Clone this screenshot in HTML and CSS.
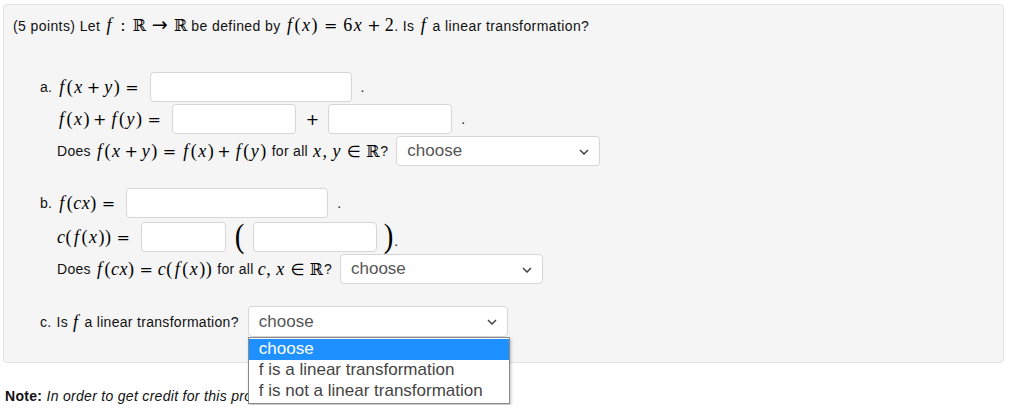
FILE: index.html
```html
<!DOCTYPE html>
<html>
<head>
<meta charset="utf-8">
<link rel="stylesheet" href="styles.css">
</head>
<body>
<div class="well">
  <p class="title">(5 points) Let <span class="m"><i class="f">f</i><span class="op rel col">:</span><span class="bb">ℝ</span><span class="op rel arr">→</span><span class="bb">ℝ</span></span> be defined by <span class="m"><i class="f">f</i>(<i>x</i>)<span class="op rel wide">=</span>6<i>x</i><span class="op bin wide">+</span>2</span>. Is <span class="m"><i class="f">f</i></span> a linear transformation?</p>

  <div class="part part-a">
    <div class="row">
      <span class="lbl">a.</span>
      <span class="m"><i class="f">f</i>(<i>x</i><span class="op bin">+</span><i>y</i>)<span class="op rel">=</span></span>
      <span class="inp w202"></span><span class="dot">.</span>
    </div>
    <div class="row sub">
      <span class="m"><i class="f">f</i>(<i>x</i>)<span class="op bin">+</span><i class="f">f</i>(<i>y</i>)<span class="op rel">=</span></span>
      <span class="inp w124"></span>
      <span class="m plus"><span class="op">+</span></span>
      <span class="inp w124 nm"></span><span class="dot">.</span>
    </div>
    <div class="row sub">
      <span class="txt first">Does</span>
      <span class="m"><i class="f">f</i>(<i>x</i><span class="op bin">+</span><i>y</i>)<span class="op rel">=</span><i class="f">f</i>(<i>x</i>)<span class="op bin">+</span><i class="f">f</i>(<i>y</i>)</span>
      <span class="txt">for all</span>
      <span class="m"><i>x</i>,<span class="th"></span><i>y</i><span class="op rel">∈</span><span class="bb">ℝ</span></span><span class="txt q">?</span>
      <div class="sel w204"><span>choose</span><svg class="chev" width="10" height="6" viewBox="0 0 10 6"><path d="M1 1 L5 5 L9 1" fill="none" stroke="#444" stroke-width="1.5"/></svg></div>
    </div>
  </div>

  <div class="part part-b">
    <div class="row">
      <span class="lbl">b.</span>
      <span class="m"><i class="f">f</i>(<i class="c">c</i><i class="c">x</i>)<span class="op rel">=</span></span>
      <span class="inp w202"></span><span class="dot">.</span>
    </div>
    <div class="row sub tall">
      <span class="m"><i class="c">c</i>(<i class="f">f</i>(<i>x</i>))<span class="op rel">=</span></span>
      <span class="inp w85"></span>
      <span class="big lp">(</span>
      <span class="inp w124 nm"></span>
      <span class="big rp">)</span><span class="dot2">.</span>
    </div>
    <div class="row sub">
      <span class="txt first">Does</span>
      <span class="m"><i class="f">f</i>(<i class="c">c</i><i class="c">x</i>)<span class="op rel">=</span><i class="c">c</i>(<i class="f">f</i>(<i>x</i>))</span>
      <span class="txt">for all</span>
      <span class="m"><i class="c">c</i>,<span class="th"></span><i>x</i><span class="op rel">∈</span><span class="bb">ℝ</span></span><span class="txt q">?</span>
      <div class="sel w203"><span>choose</span><svg class="chev" width="10" height="6" viewBox="0 0 10 6"><path d="M1 1 L5 5 L9 1" fill="none" stroke="#444" stroke-width="1.5"/></svg></div>
    </div>
  </div>

  <div class="part part-c">
    <div class="row rowc">
      <span class="lbl">c.</span>
      <span class="txt first">Is</span>
      <span class="m"><i>f</i></span>
      <span class="txt">a linear transformation?</span>
      <div class="selwrap">
        <div class="sel w260"><span>choose</span><svg class="chev" width="10" height="6" viewBox="0 0 10 6"><path d="M1 1 L5 5 L9 1" fill="none" stroke="#444" stroke-width="1.5"/></svg></div>
        <ul class="menu">
          <li class="on">choose</li>
          <li>f is a linear transformation</li>
          <li>f is not a linear transformation</li>
        </ul>
      </div>
    </div>
  </div>
</div>
<p class="note"><b>Note:</b> <em>In order to get credit for this problem all answers must be correct.</em></p>
</body>
</html>
```

FILE: styles.css
```css
html, body {
  margin: 0;
  padding: 0;
  background: #fff;
}
body {
  font-family: "Liberation Sans", Arial, sans-serif;
  font-size: 14px;
  letter-spacing: 0.3px;
  color: #111;
}
.well {
  box-sizing: border-box;
  margin: 4px 0 0 3px;
  width: 1001px;
  height: 359px;
  background: #f5f5f5;
  border: 1px solid #e3e3e3;
  border-radius: 4px;
  padding: 10px 9px 0 9px;
}
.title {
  margin: 0;
  height: 20px;
  line-height: 20px;
  letter-spacing: 0.4px;
}
.m {
  font-family: "Liberation Serif", "DejaVu Serif", serif;
  font-size: 18px;
  line-height: 1;
  letter-spacing: 0.5px;
  white-space: nowrap;
  color: #000;
}
.m i {
  font-style: italic;
  padding: 0 1px;
}
.m i.f { padding: 0 2px; }
.m i.c { padding: 0; }
.op {
  font-family: "DejaVu Sans", sans-serif;
  font-size: 16px;
  line-height: 1;
  letter-spacing: 0;
}
.bb {
  font-family: "DejaVu Serif", serif;
  font-size: 16px;
  line-height: 1;
  letter-spacing: 0;
}
.rel {
  margin: 0 5px;
}
.rel.wide { margin: 0 6px; }
.rel.col { margin: 0 7px 0 6px; }
.rel.arr { font-size: 19px; margin: 0 6px; }
.bin {
  margin: 0 3px;
}
.bin.wide { margin: 0 4px; }
.th {
  display: inline-block;
  width: 4px;
}
.part {
  display: flex;
  flex-direction: column;
  margin-left: 27px;
}
.part-a { margin-top: 37px; gap: 2px; }
.part-b { margin-top: 22px; }
.part-c { margin-top: 22px; }
.row {
  display: flex;
  align-items: center;
  height: 30px;
  white-space: nowrap;
}
.row.sub { padding-left: 17px; }
.part-b .row.tall { margin-top: 4px; margin-bottom: 2px; }
.rowc { height: 31px; }
.lbl { margin-right: 5px; }
.txt { margin: 0 4px 0 5px; }
.txt.first { margin-left: 0; }
.txt.q { margin: 0 0 0 1px; }
.inp {
  display: inline-block;
  box-sizing: border-box;
  height: 30px;
  background: #fff;
  border: 1px solid #d6d6d6;
  border-radius: 4px;
  margin-left: 6px;
}
.inp.nm { margin-left: 0; }
.w202 { width: 202px; }
.w124 { width: 124px; }
.w85 { width: 85px; }
.dot { margin-left: 9px; }
.plus { margin: 0 9px 0 10px; }
.big {
  font-family: "Liberation Serif", serif;
  font-size: 34px;
  line-height: 30px;
  color: #000;
  transform: scaleX(0.85);
}
.lp { margin: -2px 7px 0 8px; }
.rp { margin: -2px 0 0 6px; }
.dot2 { align-self: flex-end; margin-bottom: 3px; }
.sel {
  box-sizing: border-box;
  display: flex;
  align-items: center;
  justify-content: space-between;
  height: 30px;
  background: #fff;
  border: 1px solid #d6d6d6;
  border-radius: 4px;
  padding: 0 10px 0 10px;
  font-family: "Liberation Sans", Arial, sans-serif;
  font-size: 17px;
  letter-spacing: 0;
  color: #555;
  margin-left: 8px;
}
.w204 { width: 204px; }
.w203 { width: 203px; }
.w260 { width: 260px; height: 31px; margin-left: 0; }
.chev { margin-top: 1px; }
.selwrap {
  position: relative;
  margin-left: 5px;
}
.menu {
  position: absolute;
  left: 0;
  top: 31px;
  width: 262px;
  box-sizing: border-box;
  margin: 0;
  padding: 1px 0;
  list-style: none;
  background: #fff;
  border: 1px solid #8a8a8a;
  box-shadow: 1px 2px 3px rgba(0,0,0,0.25);
  font-family: "Liberation Sans", Arial, sans-serif;
  font-size: 17px;
  letter-spacing: 0;
  color: #444;
  z-index: 2;
}
.menu li {
  height: 21px;
  line-height: 20px;
  padding-left: 10px;
}
.menu li.on {
  background: #1e90ff;
  color: #fff;
}
.note {
  margin: 24px 0 0 5px;
  font-size: 14px;
  line-height: 18px;
  color: #111;
}
```
